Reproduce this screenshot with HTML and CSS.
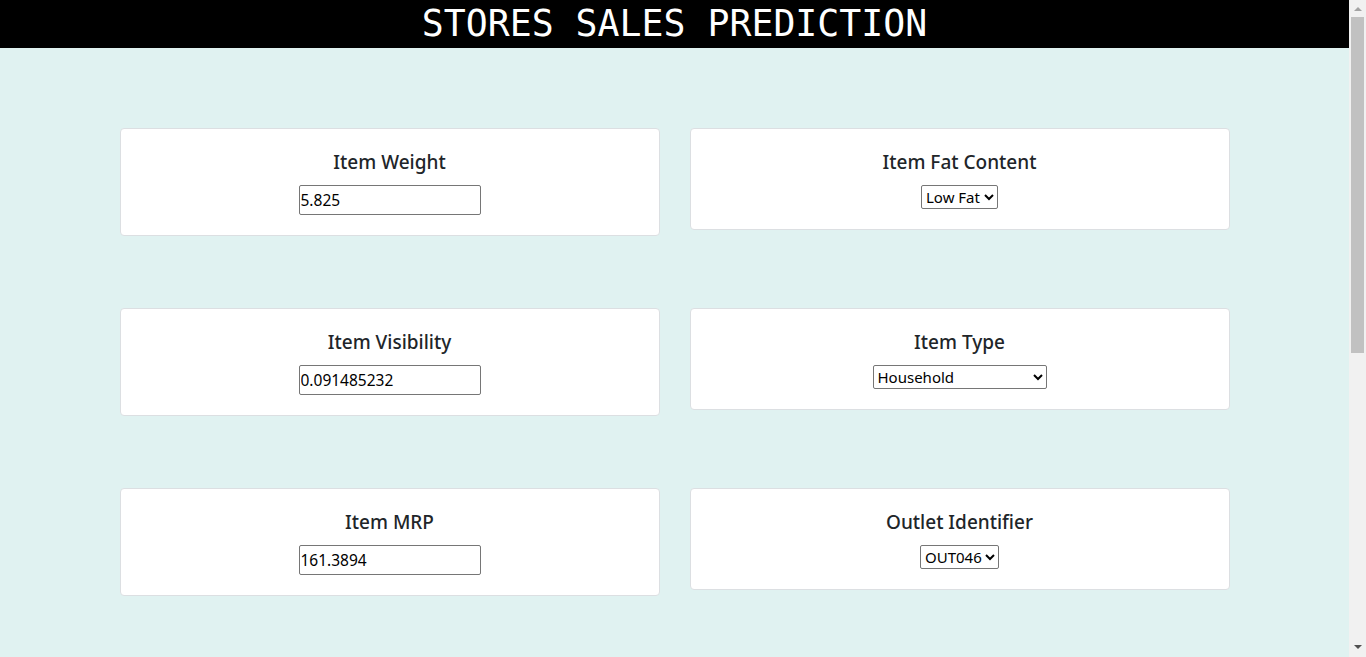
FILE: index.html
```html
<!DOCTYPE html>
<html lang="en">
<head>
<meta charset="utf-8">
<title>Stores Sales Prediction</title>
<link rel="stylesheet" href="styles.css">
</head>
<body>
<h1 class="banner">STORES SALES PREDICTION</h1>
<form class="container">
  <div class="row">
    <div class="card"><label class="card-title" for="w">Item Weight</label><input id="w" class="field" type="text" value="5.825"></div>
    <div class="card"><label class="card-title" for="f">Item Fat Content</label><select id="f" class="pick"><option>Low Fat</option><option>Regular</option></select></div>
  </div>
  <div class="row">
    <div class="card"><label class="card-title" for="v">Item Visibility</label><input id="v" class="field" type="text" value="0.091485232"></div>
    <div class="card"><label class="card-title" for="t">Item Type</label><select id="t" class="pick pick-wide"><option>Household</option><option>Fruits and Vegetables</option></select></div>
  </div>
  <div class="row">
    <div class="card"><label class="card-title" for="m">Item MRP</label><input id="m" class="field" type="text" value="161.3894"></div>
    <div class="card"><label class="card-title" for="o">Outlet Identifier</label><select id="o" class="pick"><option>OUT046</option><option>OUT049</option></select></div>
  </div>
</form>
<div class="scrollbar" aria-hidden="true">
  <svg class="arrow" width="17" height="17" viewBox="0 0 17 17"><path d="M5 11h8l-4-4z" fill="#a3a3a3"/></svg>
  <div class="track"><div class="thumb"></div></div>
  <svg class="arrow" width="17" height="17" viewBox="0 0 17 17"><path d="M5 5h8l-4 4z" fill="#505050"/></svg>
</div>
</body>
</html>
```
FILE: styles.css
```css
html, body {
  margin: 0;
  padding: 0;
}
body {
  background: #e0f2f1;
  font-family: "Noto Sans", "Open Sans", sans-serif;
  color: #212529;
  padding-right: 17px;
}
.banner {
  margin: 0;
  height: 48px;
  line-height: 48px;
  background: #000;
  color: #fff;
  text-align: center;
  font-family: "DejaVu Sans Mono", "Liberation Mono", monospace;
  font-weight: normal;
  font-size: 36.5px;
}
.container {
  width: 1110px;
  margin: 0 auto;
  padding: 80px 0 40px;
  display: flex;
  flex-direction: column;
  gap: 72px;
}
.row {
  display: grid;
  grid-template-columns: 1fr 1fr;
  gap: 30px;
  align-items: start;
}
.card {
  background: #fff;
  border: 1px solid #dcdfe2;
  border-radius: 4px;
  padding: 20px;
  display: flex;
  flex-direction: column;
  align-items: center;
}
.card-title {
  font-size: 19px;
  font-weight: 500;
  line-height: 26px;
  margin-bottom: 10px;
}
.field {
  box-sizing: border-box;
  width: 182px;
  height: 30px;
  border: 1px solid #767676;
  border-radius: 2px;
  padding: 1px 1px;
  font-family: "Noto Sans", sans-serif;
  font-size: 15.5px;
  color: #000;
}
.pick {
  box-sizing: border-box;
  height: 24px;
  border: 1px solid #767676;
  border-radius: 2px;
  font-family: "Noto Sans", sans-serif;
  font-size: 15px;
  color: #000;
  background: #fff;
}
.pick-wide {
  width: 174px;
}
.scrollbar {
  position: fixed;
  top: 0;
  right: 0;
  bottom: 0;
  width: 17px;
  background: #f1f1f1;
  display: flex;
  flex-direction: column;
}
.arrow {
  display: block;
  flex: none;
}
.track {
  flex: 1;
  padding: 0 2px;
}
.thumb {
  height: 336px;
  background: #c1c1c1;
}
```
